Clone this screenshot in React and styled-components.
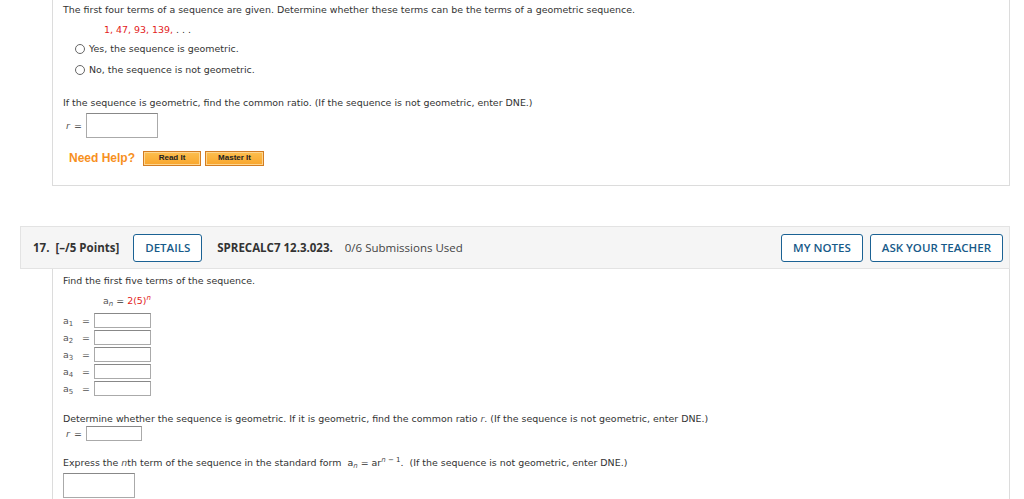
import React from "react";
import styled, { createGlobalStyle } from "styled-components";

const Global = createGlobalStyle`
  html, body { margin: 0; padding: 0; background: #fff; }
  body { font-family: "DejaVu Sans", Verdana, sans-serif; color: #333; }
  * { box-sizing: border-box; }
`;

const Page = styled.div`
  padding: 0 14px 0 20px;
  width: 1024px;
`;

const QBody = styled.div`
  margin-left: 32px;
  border-left: 1px solid #dcdcdc;
  border-right: 1px solid #dcdcdc;
  ${(p) => (p.$closed ? "border-bottom: 1px solid #dcdcdc;" : "")}
  height: ${(p) => p.$h}px;
  padding: ${(p) => p.$pt}px 10px 0 10px;
  font-size: 9.45px;
  line-height: 12px;
  color: #333;
`;

const Line = styled.div`
  margin-top: ${(p) => p.$mt || 0}px;
  padding-left: ${(p) => p.$indent || 0}px;
  white-space: nowrap;
`;

const Red = styled.span`
  color: #e31b1b;
`;

const RadioGroup = styled.div`
  margin-top: 2px;
`;

const RadioRow = styled.label`
  display: flex;
  align-items: center;
  height: 21px;
  padding-left: 12px;
  gap: 4px;
`;

const Radio = styled.span`
  width: 10px;
  height: 10px;
  border: 1px solid #666;
  border-radius: 50%;
  background: #fff;
  flex: none;
`;

const InputRow = styled.div`
  display: flex;
  align-items: center;
  margin-top: ${(p) => p.$mt || 0}px;
  padding-left: ${(p) => p.$indent || 0}px;
  gap: ${(p) => p.$gap || 4}px;
`;

const TermList = styled.div`
  margin-top: 6px;
`;

const Box = styled.div`
  width: ${(p) => p.$w}px;
  height: ${(p) => p.$h}px;
  border: 1px solid #aaa;
  border-top-color: #888;
  background: #fff;
  flex: none;
`;

const Var = styled.span`
  font-style: italic;
  color: #555;
`;

const Help = styled.div`
  display: flex;
  align-items: center;
  gap: 4px;
  margin-top: ${(p) => p.$mt}px;
  padding-left: 6px;
  height: 16px;
`;

const HelpText = styled.span`
  font-family: "Liberation Sans", Arial, sans-serif;
  font-weight: bold;
  font-size: 12px;
  color: #f7901e;
  margin-right: 4px;
`;

const OrangeBtn = styled.span`
  display: inline-flex;
  align-items: center;
  justify-content: center;
  width: ${(p) => p.$w}px;
  height: 15px;
  background: linear-gradient(#fcbf4f, #f9a52c);
  border: 1px solid #d37d22;
  box-shadow: inset 0 0 0 1px #fdd58f;
  font-family: "Liberation Sans", Arial, sans-serif;
  font-weight: bold;
  font-size: 8px;
  color: #222;
`;

const Header = styled.div`
  margin-top: 40px;
  height: 43px;
  background: #f5f5f5;
  border: 1px solid #e3e3e3;
  display: flex;
  align-items: center;
  padding: 0 6px 0 12px;
  font-family: "Open Sans", sans-serif;
  font-size: 11.5px;
  color: #333;
`;

const Bold = styled.span`
  font-weight: 700;
  margin-right: ${(p) => p.$mr || 0}px;
  color: #333;
`;

const Muted = styled.span`
  color: #444;
`;

const Spacer = styled.div`
  flex: 1;
`;

const OutlineBtn = styled.span`
  display: inline-flex;
  align-items: center;
  justify-content: center;
  height: 28px;
  padding: 0 ${(p) => p.$px || 11}px;
  border: 1.5px solid #1b6294;
  border-radius: 3px;
  background: #fff;
  color: #175a89;
  font-weight: 600;
  font-size: 11.5px;
  margin: 0 ${(p) => p.$mr || 0}px 0 ${(p) => p.$ml || 0}px;
`;

const Sub = styled.sub`
  font-size: 7px;
  vertical-align: -2px;
  line-height: 0;
`;

const Sup = styled.sup`
  font-size: 7px;
  vertical-align: 4px;
  line-height: 0;
`;

const ALabel = styled.span`
  width: 27px;
  display: inline-flex;
  justify-content: space-between;
  color: #555;
`;

const Upright = styled.span`
  color: #555;
`;

const terms = [1, 2, 3, 4, 5];

export default function App() {
  return (
    <>
      <Global />
      <Page>
        <QBody $closed $h={186} $pt={4}>
          <Line>
            The first four terms of a sequence are given. Determine whether these terms can be the terms of a geometric sequence.
          </Line>
          <Line $mt={8} $indent={41}>
            <Red>1, 47, 93, 139,</Red> . . .
          </Line>
          <RadioGroup>
            <RadioRow>
              <Radio />
              Yes, the sequence is geometric.
            </RadioRow>
            <RadioRow>
              <Radio />
              No, the sequence is not geometric.
            </RadioRow>
          </RadioGroup>
          <Line $mt={17}>
            If the sequence is geometric, find the common ratio. (If the sequence is not geometric, enter DNE.)
          </Line>
          <InputRow $mt={4} $indent={3} $gap={4}>
            <Var>r</Var> =
            <Box $w={72} $h={25} />
          </InputRow>
          <Help $mt={12}>
            <HelpText>Need Help?</HelpText>
            <OrangeBtn $w={58}>Read It</OrangeBtn>
            <OrangeBtn $w={59}>Master It</OrangeBtn>
          </Help>
        </QBody>

        <Header>
          <Bold $mr={6}>17.</Bold>
          <Bold $mr={14}>[–/5 Points]</Bold>
          <OutlineBtn $mr={15}>DETAILS</OutlineBtn>
          <Bold $mr={12}>SPRECALC7 12.3.023.</Bold>
          <Muted>0/6 Submissions Used</Muted>
          <Spacer />
          <OutlineBtn $mr={7}>MY NOTES</OutlineBtn>
          <OutlineBtn>ASK YOUR TEACHER</OutlineBtn>
        </Header>

        <QBody $h={240} $pt={6}>
          <Line>Find the first five terms of the sequence.</Line>
          <Line $mt={8} $indent={40}>
            <Upright>a</Upright>
            <Sub>
              <Var>n</Var>
            </Sub>{" "}
            = <Red>2(5)</Red>
            <Sup>
              <Red>
                <i>n</i>
              </Red>
            </Sup>
          </Line>
          <TermList>
            {terms.map((i) => (
              <InputRow key={i} $mt={i === 1 ? 0 : 2} $indent={0} $gap={4}>
                <ALabel>
                  <span>
                    a<Sub>{i}</Sub>
                  </span>
                  <span>=</span>
                </ALabel>
                <Box $w={57} $h={15} />
              </InputRow>
            ))}
          </TermList>
          <Line $mt={17}>
            Determine whether the sequence is geometric. If it is geometric, find the common ratio <Var>r</Var>. (If the sequence is not geometric, enter DNE.)
          </Line>
          <InputRow $mt={1} $indent={3} $gap={4}>
            <Var>r</Var> =
            <Box $w={56} $h={15} />
          </InputRow>
          <Line $mt={16}>
            Express the <Var>n</Var>th term of the sequence in the standard form &nbsp;a<Sub><Var>n</Var></Sub> = ar<Sup><Var>n</Var> − 1</Sup>. &nbsp;(If the sequence is not geometric, enter DNE.)
          </Line>
          <InputRow $mt={4}>
            <Box $w={72} $h={25} />
          </InputRow>
        </QBody>
      </Page>
    </>
  );
}
